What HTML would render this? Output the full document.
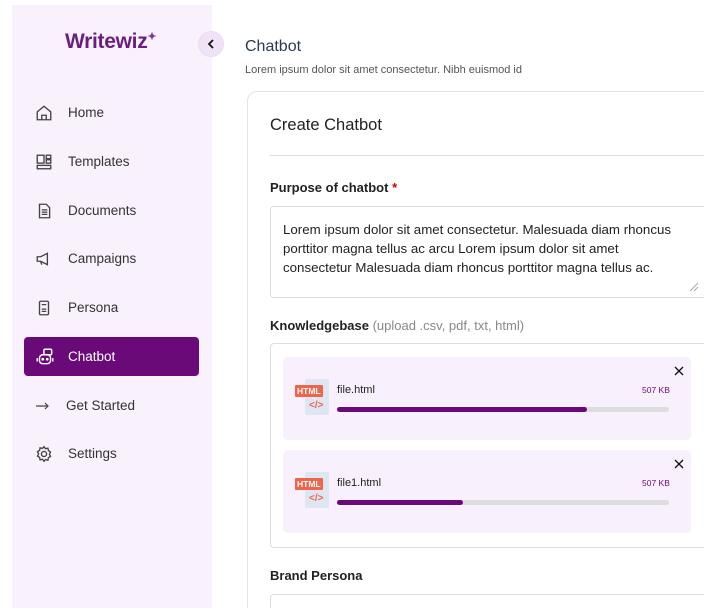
<!DOCTYPE html>
<html style="width:704px;height:608px;overflow:hidden"><head><style>
*{margin:0;padding:0;box-sizing:border-box}
body{width:704px;height:608px;overflow:hidden;background:#fff;font-family:"Liberation Sans",sans-serif;position:relative;color:#222}
.abs{position:absolute}
.side{left:12px;top:5px;width:200px;height:603px;background:#f9f1fc}
.logo{left:65px;top:30px;font-size:21px;font-weight:bold;color:#6b1f7c;letter-spacing:-0.3px}
.logo sup{font-size:11px;color:#7a3a9a}
.btn{left:198px;top:31px;width:26px;height:26px;border-radius:50%;background:#f1e3f7;border:1px solid #eadcf2}
.nav{left:24px;width:175px;height:39px;font-size:13.5px;color:#333;display:flex;align-items:center}
.nav svg{position:absolute;left:11px}
.nav span{position:absolute;left:44px}
.nav.act{background:#6a0a78;color:#fff;border-radius:4px}
.t1{left:245px;top:38px;font-size:16px;color:#2c3a4f}
.t2{left:245px;top:64px;font-size:11px;color:#555}
.card{left:247px;top:91px;width:480px;height:540px;border:1px solid #e4e4e4;border-radius:10px}
.lbl{font-size:13px;color:#222;font-weight:bold;left:270px}
.box{left:270px;width:460px;border:1px solid #ddd;border-radius:4px}
.file{left:283px;width:408px;height:83px;background:#f8f0fc;border-radius:5px}
.bar{left:54px;top:50px;width:332px;height:5px;border-radius:3px;background:#ddd}
.bar i{display:block;height:5px;border-radius:3px;background:#6a0a78}
</style></head><body>
<div class="abs side"></div>
<div class="abs logo">Writewiz<sup>✦</sup></div>
<div class="abs btn"><svg width="26" height="26" style="position:absolute;left:-1px;top:-1px"><path d="M15 9l-4 4 4 4" stroke="#111" stroke-width="1.8" fill="none"/></svg></div>

<div class="abs nav" style="top:93px"><svg width="18" height="18" viewBox="0 0 16 16" fill="none" stroke="#444" stroke-width="1.2"><path d="M2 7l6-5 6 5v7H2z"/><path d="M6 14v-4h4v4"/></svg><span>Home</span></div>
<div class="abs nav" style="top:142px"><svg width="18" height="18" viewBox="0 0 16 16" fill="none" stroke="#444" stroke-width="1.2"><rect x="2" y="2" width="6" height="7"/><rect x="10" y="2" width="4" height="3"/><rect x="10" y="6" width="4" height="3"/><rect x="2" y="11" width="12" height="3"/></svg><span>Templates</span></div>
<div class="abs nav" style="top:191px"><svg width="18" height="18" viewBox="0 0 16 16" fill="none" stroke="#444" stroke-width="1.2"><path d="M4 2h6l3 3v9H4z"/><path d="M6 7h5M6 9h5M6 11h5"/></svg><span>Documents</span></div>
<div class="abs nav" style="top:239px"><svg width="18" height="18" viewBox="0 0 16 16" fill="none" stroke="#444" stroke-width="1.2"><path d="M2 6h3l6-3v10l-6-3H2z"/><path d="M5 10l1 3"/></svg><span>Campaigns</span></div>
<div class="abs nav" style="top:288px"><svg width="18" height="18" viewBox="0 0 16 16" fill="none" stroke="#444" stroke-width="1.2"><rect x="4" y="2" width="8" height="12" rx="1"/><path d="M6 5h4M6 9h4M6 11h4"/></svg><span>Persona</span></div>
<div class="abs nav act" style="top:337px"><svg width="20" height="20" viewBox="0 0 18 18" fill="none" stroke="#fff" stroke-width="1.3"><rect x="4" y="7" width="10" height="8" rx="3"/><rect x="8" y="2" width="7" height="5" rx="1"/><circle cx="7" cy="11" r=".6"/><circle cx="11" cy="11" r=".6"/><path d="M2 10v3M16 10v3"/></svg><span>Chatbot</span></div>
<div class="abs nav" style="top:386px"><svg width="16" height="16" viewBox="0 0 16 16" fill="none" stroke="#444" stroke-width="1.2"><path d="M1 8h12M10 5l3 3-3 3"/></svg><span style="left:42px">Get Started</span></div>
<div class="abs nav" style="top:434px"><svg width="18" height="18" viewBox="0 0 16 16" fill="none" stroke="#444" stroke-width="1.2"><circle cx="8" cy="8" r="2.3"/><path d="M8 1.5l1.3 1.8 2.2-.5.4 2.2 1.9 1.2-1 2 1 2-1.9 1.1-.4 2.2-2.2-.5L8 14.5l-1.3-1.8-2.2.5-.4-2.2-1.9-1.1 1-2-1-2 1.9-1.2.4-2.2 2.2.5z"/></svg><span>Settings</span></div>

<div class="abs t1">Chatbot</div>
<div class="abs t2">Lorem ipsum dolor sit amet consectetur. Nibh euismod id</div>
<div class="abs card"></div>
<div class="abs" style="left:270px;top:116px;font-size:16.5px;color:#222">Create Chatbot</div>
<div class="abs" style="left:270px;top:155px;width:434px;height:1px;background:#ddd"></div>
<div class="abs lbl" style="top:180px">Purpose of chatbot <span style="color:#c00">*</span></div>
<div class="abs box" style="top:206px;height:92px"></div>
<div class="abs" style="left:283px;top:220px;width:395px;font-size:13.3px;line-height:19px;color:#222">Lorem ipsum dolor sit amet consectetur. Malesuada diam rhoncus porttitor magna tellus ac arcu Lorem ipsum dolor sit amet consectetur Malesuada diam rhoncus porttitor magna tellus ac.</div>
<svg class="abs" style="left:688px;top:281px" width="12" height="12"><path d="M2 10l8-8M6 10l4-4" stroke="#aaa"/></svg>
<div class="abs lbl" style="top:318px">Knowledgebase <span style="font-weight:normal;color:#888">(upload .csv, pdf, txt, html)</span></div>
<div class="abs box" style="top:343px;height:205px"></div>

<div class="abs file" style="top:357px">
<div class="abs" style="left:22px;top:22px;width:24px;height:36px;background:#dfe6f3;border-radius:2px"></div>
<div class="abs" style="left:12px;top:28px;font-size:8.5px;font-weight:bold;color:#fff;background:#f0654a;padding:1px 2px;border-radius:1px">HTML</div>
<div class="abs" style="left:26px;top:43px;font-size:10px;color:#f0654a;font-weight:bold">&lt;/&gt;</div>
<div class="abs" style="left:54px;top:27px;font-size:11px;color:#222">file.html</div>
<div class="abs" style="left:359px;top:28px;font-size:8.5px;color:#6a0a78">507 KB</div>
<div class="abs bar"><i style="width:250px"></i></div>
<svg class="abs" style="left:391px;top:9px" width="10" height="10"><path d="M1 1l8 8M9 1l-8 8" stroke="#111" stroke-width="1.3"/></svg>
</div>
<div class="abs file" style="top:450px">
<div class="abs" style="left:22px;top:22px;width:24px;height:36px;background:#dfe6f3;border-radius:2px"></div>
<div class="abs" style="left:12px;top:28px;font-size:8.5px;font-weight:bold;color:#fff;background:#f0654a;padding:1px 2px;border-radius:1px">HTML</div>
<div class="abs" style="left:26px;top:43px;font-size:10px;color:#f0654a;font-weight:bold">&lt;/&gt;</div>
<div class="abs" style="left:54px;top:27px;font-size:11px;color:#222">file1.html</div>
<div class="abs" style="left:359px;top:28px;font-size:8.5px;color:#6a0a78">507 KB</div>
<div class="abs bar"><i style="width:126px"></i></div>
<svg class="abs" style="left:391px;top:9px" width="10" height="10"><path d="M1 1l8 8M9 1l-8 8" stroke="#111" stroke-width="1.3"/></svg>
</div>

<div class="abs lbl" style="top:568px">Brand Persona</div>
<div class="abs box" style="top:594px;height:40px"></div>
</body></html>
